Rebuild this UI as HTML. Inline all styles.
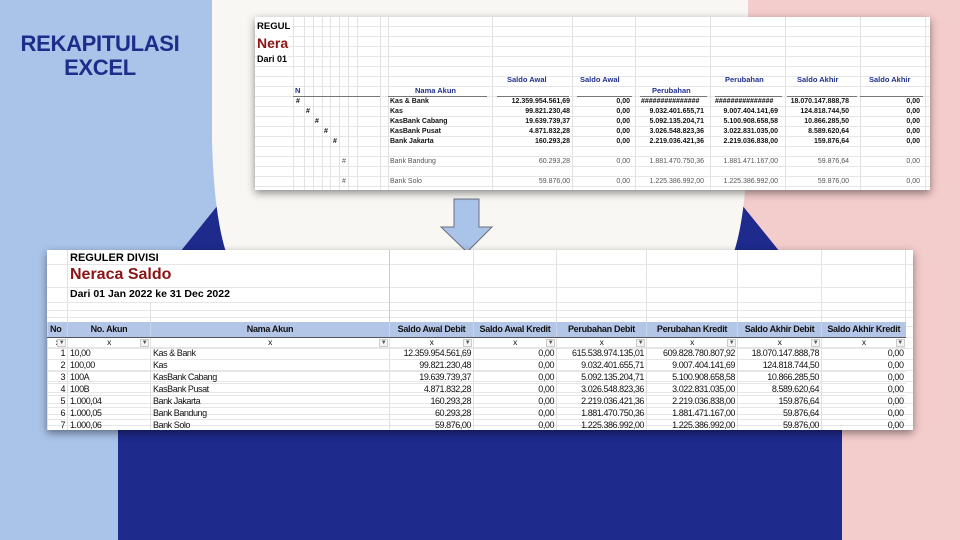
<!DOCTYPE html>
<html><head><meta charset="utf-8"><style>
*{margin:0;padding:0;box-sizing:border-box}
body{width:960px;height:540px;overflow:hidden;position:relative;font-family:"Liberation Sans",sans-serif;background:#a9c3e9}
.abs{position:absolute}
.t{position:absolute;white-space:nowrap;line-height:1}
#top{left:255px;top:17px;width:675px;height:173px;background:#fff;box-shadow:0 3px 8px rgba(0,0,0,.45);overflow:hidden;
background-image:repeating-linear-gradient(to bottom,transparent 0,transparent 9px,#e6e6e6 9px,#e6e6e6 10px)}
#top .v{position:absolute;top:0;bottom:0;width:1px;background:#e2e2e2}
#top .h{font-size:7.5px;font-weight:bold;color:#1f2f8f}
#top .d{font-size:7px;font-weight:bold;color:#111}
#top .g{font-size:7px;color:#555}
.r{text-align:right}
#bot{left:47px;top:250px;width:866px;height:180px;background:#fff;box-shadow:0 3px 8px rgba(0,0,0,.45);overflow:hidden}
table{border-collapse:collapse;table-layout:fixed;font-size:9px;letter-spacing:-0.45px;position:absolute;left:0;top:72px}
td{height:11.3px;padding:0 2px;white-space:nowrap;overflow:hidden;line-height:11px;border-left:1px solid #e0e0e0;border-bottom:1px solid #e6e6e6;color:#111}
tr.hd td{background:#b4c6e7;font-weight:bold;text-align:center;height:15px;border-left:1px solid #c9d5ec;border-bottom:1px solid #555;letter-spacing:-0.3px}
tr.f td{text-align:center;height:10px;font-size:8.5px;position:relative;line-height:9px}
tr.f td span{position:absolute;right:1px;top:1px;width:9px;height:8px;border:1px solid #ccc;font-size:6px;line-height:6px;color:#555;background:#f4f4f4}
td.n{text-align:right}
</style></head><body>
<svg class="abs" style="left:0;top:0" width="960" height="540">
<rect x="480" y="0" width="480" height="540" fill="#f3cccc"/>
<rect x="0" y="0" width="480" height="540" fill="#a9c3e9"/>
<polygon points="218,205 180,252 229,252" fill="#1e2a8c"/>
<polygon points="742,205 780,252 731,252" fill="#1e2a8c"/>
<rect x="118" y="420" width="724" height="120" fill="#1e2a8c"/>
<path d="M212,0 L748,0 L748,140 Q746,220 732,258 L228,258 Q214,220 212,140 Z" fill="#f8f7f3"/>
<polygon points="454,199 479,199 479,227 492,227 467,252 441,227 454,227" fill="#a9c3e9" stroke="#6b6f7a" stroke-width="1"/>
</svg>
<div class="t" style="left:0;width:200px;text-align:center;top:32px;font-size:22px;font-weight:bold;color:#1f2d8a;line-height:24px;letter-spacing:-0.3px">REKAPITULASI<br>EXCEL</div>

<div id="top" class="abs">
<div class="v" style="left:38px"></div><div class="v" style="left:49px"></div><div class="v" style="left:58px"></div><div class="v" style="left:67px"></div><div class="v" style="left:75px"></div><div class="v" style="left:84px"></div><div class="v" style="left:93px"></div><div class="v" style="left:102px"></div><div class="v" style="left:125px"></div><div class="v" style="left:133px"></div><div class="v" style="left:237px"></div><div class="v" style="left:317px"></div><div class="v" style="left:380px"></div><div class="v" style="left:455px"></div><div class="v" style="left:530px"></div><div class="v" style="left:605px"></div><div class="v" style="left:670px"></div>
<div class="t" style="left:2px;top:5px;font-size:9.5px;font-weight:bold;background:#fff;padding-right:2px">REGUL</div>
<div class="t" style="left:2px;top:19px;font-size:14px;font-weight:bold;color:#8b1414;background:#fff;padding-right:1px">Nera</div>
<div class="t" style="left:2px;top:38px;font-size:9px;font-weight:bold;background:#fff;padding-right:1px">Dari 01</div>
<div class="abs" style="left:38px;top:79px;width:87px;height:1px;background:#777"></div>
<div class="abs" style="left:133px;top:79px;width:99px;height:1px;background:#777"></div>
<div class="abs" style="left:242px;top:79px;width:72px;height:1px;background:#777"></div>
<div class="abs" style="left:322px;top:79px;width:55px;height:1px;background:#777"></div>
<div class="abs" style="left:385px;top:79px;width:67px;height:1px;background:#777"></div>
<div class="abs" style="left:460px;top:79px;width:67px;height:1px;background:#777"></div>
<div class="abs" style="left:532px;top:79px;width:70px;height:1px;background:#777"></div>
<div class="abs" style="left:605px;top:79px;width:63px;height:1px;background:#777"></div>
<div class="t h" style="left:40px;top:70px">N</div>
<div class="t h" style="left:160px;top:70px">Nama Akun</div>
<div class="t h" style="left:252px;top:59px">Saldo Awal</div>
<div class="t h" style="left:325px;top:59px">Saldo Awal</div>
<div class="t h" style="left:397px;top:70px">Perubahan</div>
<div class="t h" style="left:470px;top:59px">Perubahan</div>
<div class="t h" style="left:542px;top:59px">Saldo Akhir</div>
<div class="t h" style="left:614px;top:59px">Saldo Akhir</div>
<div class="abs" style="top:81px;left:0;width:675px">
<div class="t d" style="left:41px;top:0">#</div><div class="t d" style="left:135px;top:0">Kas &amp; Bank</div><div class="t d r" style="right:360px;top:0">12.359.954.561,69</div><div class="t d r" style="right:300px;top:0">0,00</div><div class="t d" style="left:386px;top:0">###############</div><div class="t d" style="left:460px;top:0">###############</div><div class="t d r" style="right:81px;top:0">18.070.147.888,78</div><div class="t d r" style="right:10px;top:0">0,00</div>
<div class="t d" style="left:51px;top:10px">#</div><div class="t d" style="left:135px;top:10px">Kas</div><div class="t d r" style="right:360px;top:10px">99.821.230,48</div><div class="t d r" style="right:300px;top:10px">0,00</div><div class="t d r" style="right:226px;top:10px">9.032.401.655,71</div><div class="t d r" style="right:152px;top:10px">9.007.404.141,69</div><div class="t d r" style="right:81px;top:10px">124.818.744,50</div><div class="t d r" style="right:10px;top:10px">0,00</div>
<div class="t d" style="left:60px;top:20px">#</div><div class="t d" style="left:135px;top:20px">KasBank Cabang</div><div class="t d r" style="right:360px;top:20px">19.639.739,37</div><div class="t d r" style="right:300px;top:20px">0,00</div><div class="t d r" style="right:226px;top:20px">5.092.135.204,71</div><div class="t d r" style="right:152px;top:20px">5.100.908.658,58</div><div class="t d r" style="right:81px;top:20px">10.866.285,50</div><div class="t d r" style="right:10px;top:20px">0,00</div>
<div class="t d" style="left:69px;top:30px">#</div><div class="t d" style="left:135px;top:30px">KasBank Pusat</div><div class="t d r" style="right:360px;top:30px">4.871.832,28</div><div class="t d r" style="right:300px;top:30px">0,00</div><div class="t d r" style="right:226px;top:30px">3.026.548.823,36</div><div class="t d r" style="right:152px;top:30px">3.022.831.035,00</div><div class="t d r" style="right:81px;top:30px">8.589.620,64</div><div class="t d r" style="right:10px;top:30px">0,00</div>
<div class="t d" style="left:78px;top:40px">#</div><div class="t d" style="left:135px;top:40px">Bank Jakarta</div><div class="t d r" style="right:360px;top:40px">160.293,28</div><div class="t d r" style="right:300px;top:40px">0,00</div><div class="t d r" style="right:226px;top:40px">2.219.036.421,36</div><div class="t d r" style="right:152px;top:40px">2.219.036.838,00</div><div class="t d r" style="right:81px;top:40px">159.876,64</div><div class="t d r" style="right:10px;top:40px">0,00</div>
<div class="t g" style="left:87px;top:60px">#</div><div class="t g" style="left:135px;top:60px">Bank Bandung</div><div class="t g r" style="right:360px;top:60px">60.293,28</div><div class="t g r" style="right:300px;top:60px">0,00</div><div class="t g r" style="right:226px;top:60px">1.881.470.750,36</div><div class="t g r" style="right:152px;top:60px">1.881.471.167,00</div><div class="t g r" style="right:81px;top:60px">59.876,64</div><div class="t g r" style="right:10px;top:60px">0,00</div>
<div class="t g" style="left:87px;top:80px">#</div><div class="t g" style="left:135px;top:80px">Bank Solo</div><div class="t g r" style="right:360px;top:80px">59.876,00</div><div class="t g r" style="right:300px;top:80px">0,00</div><div class="t g r" style="right:226px;top:80px">1.225.386.992,00</div><div class="t g r" style="right:152px;top:80px">1.225.386.992,00</div><div class="t g r" style="right:81px;top:80px">59.876,00</div><div class="t g r" style="right:10px;top:80px">0,00</div>
</div>
</div>

<div id="bot" class="abs" style="background-image:repeating-linear-gradient(to bottom,#fff 0,#fff 10px,#e6e6e6 10px,#e6e6e6 11px)">
<div class="abs" style="left:0;top:0;width:866px;height:72px;background:#fff;background-image:linear-gradient(#e6e6e6,#e6e6e6),linear-gradient(#e6e6e6,#e6e6e6),linear-gradient(#e6e6e6,#e6e6e6),linear-gradient(#e6e6e6,#e6e6e6),linear-gradient(#e6e6e6,#e6e6e6);background-size:100% 1px;background-repeat:no-repeat;background-position:0 14px,0 37px,0 52px,0 60px,0 67px"></div>
<div class="abs" style="left:20px;top:0;width:1px;height:72px;background:#e2e2e2"></div>
<div class="abs" style="left:103px;top:52px;width:1px;height:20px;background:#e2e2e2"></div>
<div class="abs" style="left:342px;top:0;width:1px;height:72px;background:#ccc"></div>
<div class="abs" style="left:426px;top:0;width:1px;height:72px;background:#e2e2e2"></div>
<div class="abs" style="left:509px;top:0;width:1px;height:72px;background:#e2e2e2"></div>
<div class="abs" style="left:599px;top:0;width:1px;height:72px;background:#e2e2e2"></div>
<div class="abs" style="left:690px;top:0;width:1px;height:72px;background:#e2e2e2"></div>
<div class="abs" style="left:774px;top:0;width:1px;height:72px;background:#e2e2e2"></div>
<div class="abs" style="left:858px;top:0;width:1px;height:72px;background:#e2e2e2"></div>
<div class="t" style="left:23px;top:3px;font-size:11px;font-weight:bold">REGULER DIVISI</div>
<div class="t" style="left:23px;top:17px;font-size:16px;font-weight:bold;color:#8b1414">Neraca Saldo</div>
<div class="t" style="left:23px;top:39px;font-size:10.5px;font-weight:bold">Dari 01 Jan 2022 ke 31 Dec 2022</div>
<table>
<colgroup><col style="width:20px"><col style="width:83px"><col style="width:239px"><col style="width:84px"><col style="width:83px"><col style="width:90px"><col style="width:91px"><col style="width:84px"><col style="width:84px"></colgroup>
<tr class="hd"><td style="text-align:left">No</td><td>No. Akun</td><td>Nama Akun</td><td>Saldo Awal Debit</td><td>Saldo Awal Kredit</td><td>Perubahan Debit</td><td>Perubahan Kredit</td><td>Saldo Akhir Debit</td><td>Saldo Akhir Kredit</td></tr>
<tr class="f"><td>x<span>▼</span></td><td>x<span>▼</span></td><td>x<span>▼</span></td><td>x<span>▼</span></td><td>x<span>▼</span></td><td>x<span>▼</span></td><td>x<span>▼</span></td><td>x<span>▼</span></td><td>x<span>▼</span></td></tr>
<tr><td class="n">1</td><td>10,00</td><td>Kas &amp; Bank</td><td class="n">12.359.954.561,69</td><td class="n">0,00</td><td class="n">615.538.974.135,01</td><td class="n">609.828.780.807,92</td><td class="n">18.070.147.888,78</td><td class="n">0,00</td></tr>
<tr><td class="n">2</td><td>100,00</td><td>Kas</td><td class="n">99.821.230,48</td><td class="n">0,00</td><td class="n">9.032.401.655,71</td><td class="n">9.007.404.141,69</td><td class="n">124.818.744,50</td><td class="n">0,00</td></tr>
<tr><td class="n">3</td><td>100A</td><td>KasBank Cabang</td><td class="n">19.639.739,37</td><td class="n">0,00</td><td class="n">5.092.135.204,71</td><td class="n">5.100.908.658,58</td><td class="n">10.866.285,50</td><td class="n">0,00</td></tr>
<tr><td class="n">4</td><td>100B</td><td>KasBank Pusat</td><td class="n">4.871.832,28</td><td class="n">0,00</td><td class="n">3.026.548.823,36</td><td class="n">3.022.831.035,00</td><td class="n">8.589.620,64</td><td class="n">0,00</td></tr>
<tr><td class="n">5</td><td>1.000,04</td><td>Bank Jakarta</td><td class="n">160.293,28</td><td class="n">0,00</td><td class="n">2.219.036.421,36</td><td class="n">2.219.036.838,00</td><td class="n">159.876,64</td><td class="n">0,00</td></tr>
<tr><td class="n">6</td><td>1.000,05</td><td>Bank Bandung</td><td class="n">60.293,28</td><td class="n">0,00</td><td class="n">1.881.470.750,36</td><td class="n">1.881.471.167,00</td><td class="n">59.876,64</td><td class="n">0,00</td></tr>
<tr><td class="n">7</td><td>1.000,06</td><td>Bank Solo</td><td class="n">59.876,00</td><td class="n">0,00</td><td class="n">1.225.386.992,00</td><td class="n">1.225.386.992,00</td><td class="n">59.876,00</td><td class="n">0,00</td></tr>
</table>
</div>
</body></html>
